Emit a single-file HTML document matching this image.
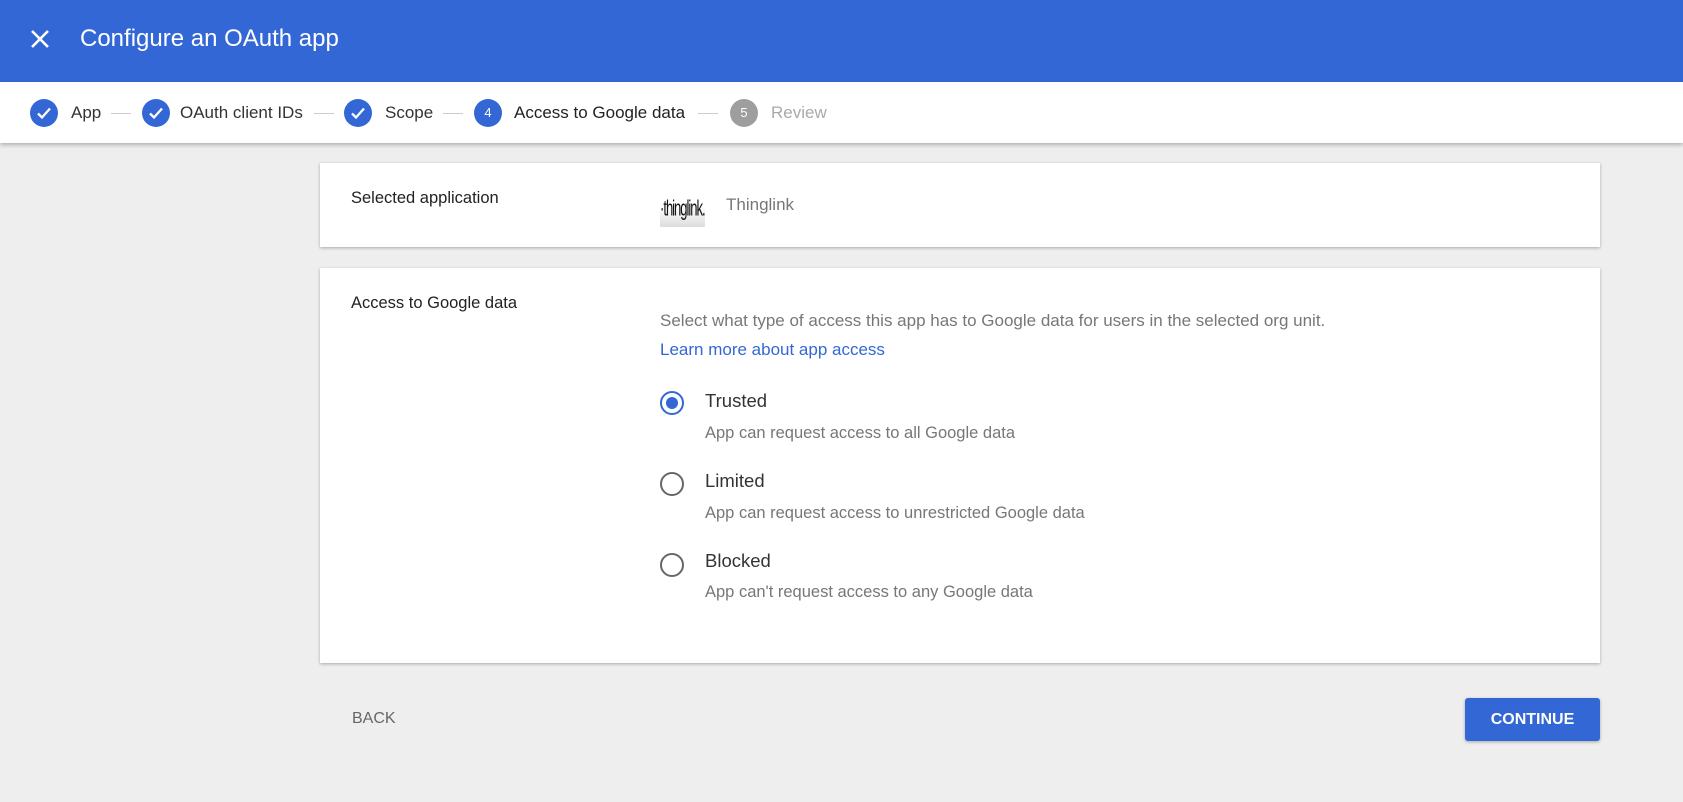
<!DOCTYPE html>
<html><head><style>
body{margin:0;width:1683px;height:802px;background:#eeeeee;font-family:"Liberation Sans",sans-serif;position:relative;overflow:hidden}
.hdr{position:absolute;left:0;top:0;width:1683px;height:82px;background:#3367d6;color:#fff}
.hdr .t{position:absolute;left:80px;top:25px;font-size:24px}
.step{position:absolute;left:0;top:82px;width:1683px;height:61px;background:#fff;box-shadow:0 2px 4px rgba(0,0,0,.25)}
.c{position:absolute;top:99px;width:28px;height:28px;border-radius:50%;background:#3367d6;color:#fff;font-size:13px;text-align:center;line-height:28px}
.s{position:absolute;top:103px;font-size:17px;color:#333}
.ln{position:absolute;top:113px;width:20px;height:1px;background:#ccc}
.card{position:absolute;left:320px;width:1280px;background:#fff;box-shadow:0 1px 3px rgba(0,0,0,.3)}
.lab{position:absolute;left:31px;font-size:16.5px;color:#222}
.g{color:#777}
.rad{position:absolute;left:660px;width:20px;height:20px;border:2px solid #666;border-radius:50%}
.rt{position:absolute;left:705px;font-size:18.5px;color:#333}
.rs{position:absolute;left:705px;font-size:16.5px;color:#777}
</style></head><body>
<div class="hdr">
<svg style="position:absolute;left:30px;top:29px" width="20" height="20" viewBox="0 0 20 20"><path d="M2 2L18 18M18 2L2 18" stroke="#fff" stroke-width="2.6"/></svg>
<div class="t">Configure an OAuth app</div></div>
<div class="step"></div>
<div class="c" style="left:30px"><svg width="28" height="28"><path d="M8 14.5l4 4 8-9" stroke="#fff" stroke-width="2.3" fill="none"/></svg></div>
<div class="s" style="left:71px">App</div><div class="ln" style="left:111px"></div>
<div class="c" style="left:142px"><svg width="28" height="28"><path d="M8 14.5l4 4 8-9" stroke="#fff" stroke-width="2.3" fill="none"/></svg></div>
<div class="s" style="left:180px">OAuth client IDs</div><div class="ln" style="left:314px"></div>
<div class="c" style="left:344px"><svg width="28" height="28"><path d="M8 14.5l4 4 8-9" stroke="#fff" stroke-width="2.3" fill="none"/></svg></div>
<div class="s" style="left:385px">Scope</div><div class="ln" style="left:443px"></div>
<div class="c" style="left:474px">4</div>
<div class="s" style="left:514px;color:#222">Access to Google data</div><div class="ln" style="left:698px"></div>
<div class="c" style="left:730px;background:#9e9e9e">5</div>
<div class="s" style="left:771px;color:#aaa">Review</div>

<div class="card" style="top:163px;height:84px">
<div class="lab" style="top:26px">Selected application</div>
<div style="position:absolute;left:340px;top:28px;width:45px;height:36px;background:linear-gradient(#fff 40%,#ddd);overflow:hidden"><div style="font-size:13px;letter-spacing:-1px;color:#111;transform:scaleY(1.7);transform-origin:0 0;margin-top:4px">·thinglink.</div></div>
<div class="g" style="position:absolute;left:406px;top:32px;font-size:17px">Thinglink</div>
</div>

<div class="card" style="top:268px;height:395px">
<div class="lab" style="top:26px">Access to Google data</div>
<div class="g" style="position:absolute;left:340px;top:43px;font-size:17px">Select what type of access this app has to Google data for users in the selected org unit.</div>
<div style="position:absolute;left:340px;top:72px;font-size:17px;color:#3367d6">Learn more about app access</div>
</div>
<div class="rad" style="top:391px;border-color:#3367d6"><div style="position:absolute;left:4px;top:4px;width:12px;height:12px;border-radius:50%;background:#3367d6"></div></div>
<div class="rt" style="top:390px">Trusted</div>
<div class="rs" style="top:424px">App can request access to all Google data</div>
<div class="rad" style="top:472px"></div>
<div class="rt" style="top:470px">Limited</div>
<div class="rs" style="top:504px">App can request access to unrestricted Google data</div>
<div class="rad" style="top:553px"></div>
<div class="rt" style="top:550px">Blocked</div>
<div class="rs" style="top:583px">App can't request access to any Google data</div>

<div style="position:absolute;left:352px;top:710px;font-size:16px;color:#666">BACK</div>
<div style="position:absolute;left:1465px;top:698px;width:135px;height:43px;background:#3367d6;border-radius:3px;box-shadow:0 1px 3px rgba(0,0,0,.3);color:#fff;font-size:16px;font-weight:bold;text-align:center;line-height:43px">CONTINUE</div>
</body></html>
